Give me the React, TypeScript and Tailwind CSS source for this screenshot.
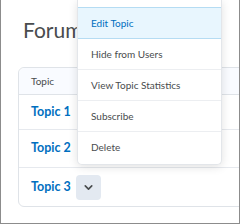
import { ChevronDown } from 'lucide-react';

const topics = ['Topic 1', 'Topic 2', 'Topic 3'];
const menuItems = ['Hide from Users', 'View Topic Statistics', 'Subscribe', 'Delete'];

export default function App() {
  return (
    <div
      className="relative w-[240px] h-[224px] overflow-hidden bg-white border-x border-b border-[#8c8c8c]"
      style={{ fontFamily: 'Lato, "Noto Sans", sans-serif' }}
    >
      {/* Page header */}
      <h1 className="pl-[22px] pt-[18px] text-[21px] leading-[24px] text-[#494c4e]">Forums</h1>

      {/* Topics table */}
      <div className="ml-[17px] mt-[25px] w-[260px] border border-[#dfe3e8] rounded-l-[6px]">
        <div className="h-[27px] flex items-center pl-[12px] bg-[#f9fbff] border-b border-[#dfe3e8] rounded-tl-[6px] text-[10px] text-[#494c4e]">
          Topic
        </div>
        {topics.map((t, i) => (
          <div
            key={t}
            className={`flex items-center gap-[5px] pl-[12px] ${i === 0 ? 'h-[35px]' : 'h-[38px]'} ${i < topics.length - 1 ? 'border-b border-[#e6e9ee]' : ''}`}
          >
            <span className="text-[12.5px] font-bold text-[#006fbf]">{t}</span>
            {i === 2 && (
              <button className="w-[25px] h-[25px] flex items-center justify-center rounded-[4px] bg-[#e3e9f1] text-[#494c4e]">
                <ChevronDown size={13} strokeWidth={3} />
              </button>
            )}
          </div>
        ))}
      </div>

      {/* Dropdown menu */}
      <div className="absolute left-[76px] top-0 w-[145px] h-[165px] pt-[7px] bg-white border-x border-b border-[#e3e6ea] rounded-b-[5px] shadow-[0_2px_10px_rgba(0,0,0,0.12)]">
        <div className="h-[32px] flex items-center pl-[13px] bg-[#e8f6fe] border-y border-[#b5dcf3] text-[10px] text-[#006fbf]">
          Edit Topic
        </div>
        {menuItems.map((m, i) => (
          <div
            key={m}
            className={`h-[31px] flex items-center pl-[13px] text-[10px] text-[#494c4e] ${i < menuItems.length - 1 ? 'border-b border-[#eceef1]' : ''}`}
          >
            {m}
          </div>
        ))}
      </div>
    </div>
  );
}
